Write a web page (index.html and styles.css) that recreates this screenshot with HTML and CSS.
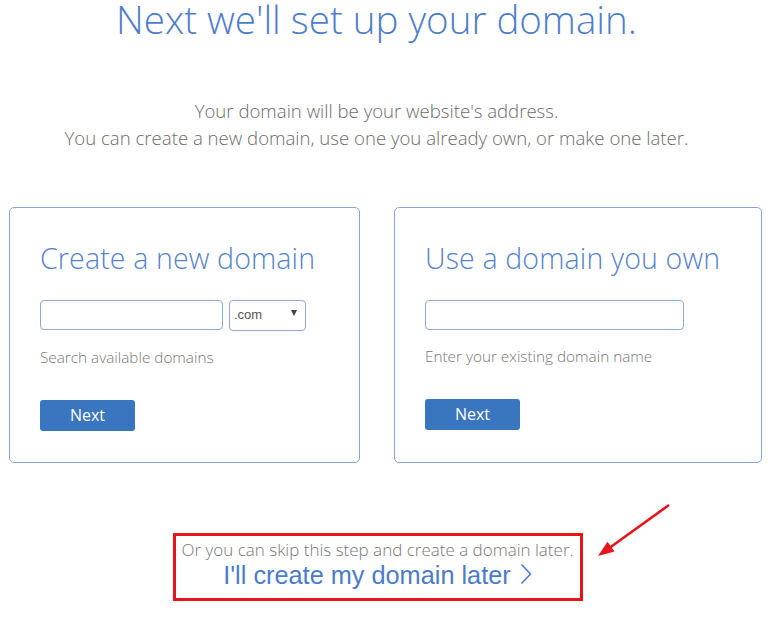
FILE: index.html
```html
<!DOCTYPE html>
<html lang="en">
<head>
<meta charset="utf-8">
<title>Set up your domain</title>
<link rel="stylesheet" href="styles.css">
</head>
<body>
<div class="page">
  <h1 class="title">Next we'll set up your domain.</h1>
  <p class="intro">Your domain will be your website's address.<br>You can create a new domain, use one you already own, or make one later.</p>

  <div class="cards">
    <div class="card card-new">
      <h2 class="card-title">Create a new domain</h2>
      <div class="field-row">
        <div class="input input-short"></div>
        <div class="select"><span class="select-text">.com</span><span class="select-arrow"></span></div>
      </div>
      <p class="hint">Search available domains</p>
      <div class="btn">Next</div>
    </div>
    <div class="card card-own">
      <h2 class="card-title">Use a domain you own</h2>
      <div class="field-row">
        <div class="input input-long"></div>
      </div>
      <p class="hint">Enter your existing domain name</p>
      <div class="btn">Next</div>
    </div>
  </div>

  <div class="later-wrap">
    <div class="later-box">
      <p class="later-note">Or you can skip this step and create a domain later.</p>
      <p class="later-link">I'll create my domain later <svg class="chev" width="12" height="22" viewBox="0 0 12 22"><path d="M1.5 1.5 L10.5 11 L1.5 20.5" fill="none" stroke="#4a7bcc" stroke-width="1.6"/></svg></p>
    </div>
  </div>

  <svg class="arrow" width="85" height="65" viewBox="0 0 85 65">
    <line x1="79" y1="6" x2="20" y2="48.5" stroke="#e8141c" stroke-width="2.6"/>
    <polygon points="8,57 24.5,52.6 17.5,42.8" fill="#e8141c"/>
  </svg>
</div>
</body>
</html>
```

FILE: styles.css
```css
html, body {
  margin: 0;
  padding: 0;
  background: #ffffff;
}

body {
  font-family: "Open Sans", "Noto Sans", sans-serif;
  font-weight: 300;
  width: 768px;
  height: 624px;
  overflow: hidden;
}

.page {
  position: relative;
  width: 753px;
  height: 624px;
}

.title {
  margin: 1px 0 0 0;
  text-align: center;
  font-size: 38.5px;
  line-height: 36px;
  font-weight: 300;
  color: #4f7dcb;
  white-space: nowrap;
}

.intro {
  margin: 60px 0 0 0;
  text-align: center;
  font-size: 18.6px;
  line-height: 27px;
  color: #6b6b6b;
}

.cards {
  display: grid;
  grid-template-columns: 351px 368px;
  column-gap: 34px;
  padding-left: 9px;
  margin-top: 56px;
}

.card {
  border: 1px solid #86a7db;
  border-radius: 5px;
  padding: 32px 30px 33px 30px;
  height: 256px;
  box-sizing: border-box;
}

.card-title {
  margin: 0;
  font-size: 28.5px;
  line-height: 36px;
  font-weight: 300;
  color: #5583cc;
  letter-spacing: 0.15px;
}

.field-row {
  display: flex;
  gap: 6px;
  margin-top: 24px;
}

.input {
  height: 30px;
  box-sizing: border-box;
  border: 1px solid #8eaad6;
  border-radius: 4px;
  background: #fff;
}

.input-short { width: 183px; }
.input-long { width: 259px; }

.select {
  width: 77px;
  height: 31px;
  box-sizing: border-box;
  border: 1px solid #8eaad6;
  border-radius: 4px;
  display: flex;
  align-items: center;
  justify-content: space-between;
  padding: 0 8px 2px 4px;
}

.select-text {
  font-family: "Liberation Sans", Arial, sans-serif;
  font-weight: 400;
  font-size: 13px;
  color: #555;
}

.select-arrow {
  width: 0;
  height: 0;
  border-left: 3.5px solid transparent;
  border-right: 3.5px solid transparent;
  border-top: 6px solid #444;
  margin-bottom: 4px;
}

.hint {
  margin: 16px 0 0 0;
  font-size: 15.3px;
  line-height: 20px;
  color: #777;
}

.btn {
  margin-top: 33px;
  width: 95px;
  height: 31px;
  border-radius: 3px;
  background: #3a76c0;
  color: #fff;
  font-size: 16px;
  font-weight: 400;
  line-height: 30px;
  text-align: center;
}

.later-wrap {
  display: flex;
  justify-content: center;
  margin-top: 70px;
  padding-left: 2px;
}

.later-box {
  width: 410px;
  height: 68px;
  box-sizing: border-box;
  border: 3px solid #e8141c;
  text-align: center;
  padding-top: 4px;
}

.later-note {
  margin: 0;
  font-size: 17px;
  line-height: 20px;
  color: #777;
}

.later-link {
  margin: 0;
  font-family: "Liberation Sans", Arial, sans-serif;
  font-weight: 400;
  font-size: 25.3px;
  line-height: 30px;
  color: #4a7bcc;
}

.chev {
  vertical-align: -1px;
  margin-left: 2px;
}

.arrow {
  position: absolute;
  left: 590px;
  top: 498px;
}
```
